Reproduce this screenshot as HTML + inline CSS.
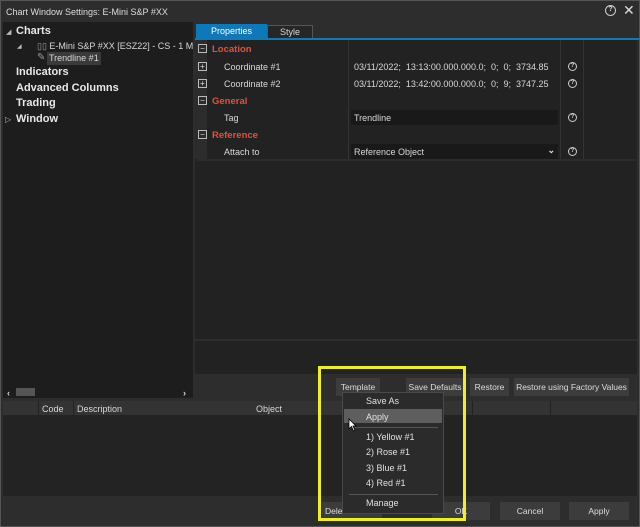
<!DOCTYPE html><html><head><style>
*{margin:0;padding:0;box-sizing:border-box}
body{width:640px;height:527px;background:#2d2d2d;font-family:"Liberation Sans",sans-serif;font-size:9px;color:#d8d8d8;position:relative;overflow:hidden}
div{position:absolute}
.b{font-weight:bold;font-size:11px;color:#e8e8e8}
.red{color:#e2513c;font-weight:bold;font-size:9.5px}
.pm{width:9px;height:9px;border:1px solid #bbb;left:198px;font-size:8px;line-height:7px;text-align:center;color:#ddd}
.btn{background:#3c3c3c;color:#ddd;height:18px;line-height:18px;text-align:center;font-size:8.5px}
.q{width:9px;height:9px;border:1.3px solid #ccc;border-radius:50%;left:568px;font-size:6px;line-height:7px;text-align:center;font-weight:bold}
.mi{left:366px;font-size:9px;color:#e0e0e0}
</style></head><body>
<div style="left:0;top:0;width:640px;height:527px;border:1px solid #555"></div>
<div style="left:6px;top:7px;font-size:9px;color:#ddd">Chart Window Settings: E-Mini S&amp;P #XX</div>
<div style="left:605px;top:5px;width:11px;height:11px;border:1.5px solid #ccc;border-radius:50%;font-size:7px;line-height:8px;text-align:center;font-weight:bold">?</div>
<div style="left:623px;top:2px;font-size:14px;color:#ddd">✕</div>
<!-- left tree -->
<div style="left:3px;top:22px;width:190px;height:376px;background:#1d1d1d"></div>
<div style="left:6px;top:28px;font-size:7px;color:#bbb">◢</div>
<div class="b" style="left:16px;top:25px">Charts</div>
<div style="left:17px;top:43px;font-size:6px;color:#bbb">◢</div>
<div style="left:37px;top:41px;font-size:9px;width:156px;overflow:hidden;white-space:nowrap"><span style="color:#999">▯▯ </span>E-Mini S&amp;P #XX [ESZ22] - CS - 1 Minute</div>
<div style="left:37px;top:52px;font-size:10px;color:#999">✎</div>
<div style="left:47px;top:52px;width:54px;height:13px;background:#3a3a3a;font-size:9px;padding:1px 2px">Trendline #1</div>
<div class="b" style="left:16px;top:66px">Indicators</div>
<div class="b" style="left:16px;top:82px">Advanced Columns</div>
<div class="b" style="left:16px;top:97px">Trading</div>
<div style="left:5px;top:115px;font-size:8px;color:#bbb">▷</div>
<div class="b" style="left:16px;top:113px">Window</div>
<div style="left:7px;top:388px;font-size:9px;font-weight:bold">‹</div>
<div style="left:16px;top:388px;width:19px;height:8px;background:#555"></div>
<div style="left:183px;top:388px;font-size:9px;font-weight:bold">›</div>
<!-- tabs -->
<div style="left:196px;top:24px;width:71px;height:15px;background:#0e78b8;color:#fff;text-align:center;line-height:14px">Properties</div>
<div style="left:267px;top:25px;width:46px;height:14px;border:1px solid #555;background:#262626;text-align:center;line-height:12px">Style</div>
<div style="left:195px;top:38px;width:445px;height:2px;background:#0e78b8"></div>
<!-- grid -->
<div style="left:195px;top:40px;width:442px;height:299px;background:#222"></div>
<div style="left:195px;top:40px;width:12px;height:119px;background:#2c2c2c"></div>
<div style="left:348px;top:40px;width:1px;height:119px;background:#333"></div>
<div style="left:560px;top:40px;width:1px;height:119px;background:#333"></div>
<div style="left:583px;top:40px;width:1px;height:119px;background:#333"></div>
<div style="left:197px;top:159px;width:440px;height:2px;background:#2c2c2c"></div>
<div class="pm" style="top:44px">−</div><div class="red" style="left:212px;top:44px">Location</div>
<div class="pm" style="top:62px">+</div><div style="left:224px;top:62px">Coordinate #1</div>
<div style="left:354px;top:62px;width:205px;overflow:hidden;white-space:nowrap">03/11/2022;&nbsp; 13:13:00.000.000.0;&nbsp; 0;&nbsp; 0;&nbsp; 3734.85</div><div class="q" style="top:62px">?</div>
<div class="pm" style="top:79px">+</div><div style="left:224px;top:79px">Coordinate #2</div>
<div style="left:354px;top:79px;width:205px;overflow:hidden;white-space:nowrap">03/11/2022;&nbsp; 13:42:00.000.000.0;&nbsp; 0;&nbsp; 9;&nbsp; 3747.25</div><div class="q" style="top:79px">?</div>
<div class="pm" style="top:96px">−</div><div class="red" style="left:212px;top:96px">General</div>
<div style="left:224px;top:113px">Tag</div>
<div style="left:351px;top:110px;width:207px;height:15px;background:#191919;padding:3px 3px">Trendline</div><div class="q" style="top:113px">?</div>
<div class="pm" style="top:130px">−</div><div class="red" style="left:212px;top:130px">Reference</div>
<div style="left:224px;top:147px">Attach to</div>
<div style="left:351px;top:144px;width:207px;height:15px;background:#191919;padding:3px 3px">Reference Object<span style="position:absolute;right:3px;top:1px;font-weight:bold">⌄</span></div><div class="q" style="top:147px">?</div>
<div style="left:195px;top:341px;width:442px;height:33px;background:#222"></div>
<!-- buttons -->
<div class="btn" style="left:336px;top:378px;width:44px">Template</div>
<div class="btn" style="left:406px;top:378px;width:58px">Save Defaults</div>
<div class="btn" style="left:470px;top:378px;width:39px">Restore</div>
<div class="btn" style="left:514px;top:378px;width:115px">Restore using Factory Values</div>
<!-- table -->
<div style="left:3px;top:401px;width:634px;height:14px;background:#333"></div>
<div style="left:38px;top:401px;width:1px;height:14px;background:#222"></div>
<div style="left:73px;top:401px;width:1px;height:14px;background:#222"></div>
<div style="left:42px;top:404px">Code</div><div style="left:77px;top:404px">Description</div><div style="left:256px;top:404px">Object</div>
<div style="left:472px;top:401px;width:1px;height:14px;background:#222"></div><div style="left:550px;top:401px;width:1px;height:14px;background:#222"></div>
<div style="left:3px;top:415px;width:634px;height:81px;background:#232323"></div>
<!-- bottom buttons -->
<div class="btn" style="left:322px;top:502px;width:60px;text-align:left;padding-left:3px">Delete</div>
<div class="btn" style="left:432px;top:502px;width:58px">OK</div>
<div class="btn" style="left:500px;top:502px;width:60px">Cancel</div>
<div class="btn" style="left:569px;top:502px;width:60px">Apply</div>
<!-- menu -->
<div style="left:342px;top:392px;width:102px;height:122px;background:#2b2b2b;border:1px solid #4a4a4a"></div>
<div style="left:344px;top:409px;width:98px;height:14px;background:#5e5e5e"></div>
<div class="mi" style="top:396px">Save As</div>
<div class="mi" style="top:412px">Apply</div>
<div style="left:349px;top:427px;width:89px;height:1px;background:#555"></div>
<div class="mi" style="top:432px">1) Yellow #1</div>
<div class="mi" style="top:447px">2) Rose #1</div>
<div class="mi" style="top:463px">3) Blue #1</div>
<div class="mi" style="top:478px">4) Red #1</div>
<div style="left:349px;top:494px;width:89px;height:1px;background:#555"></div>
<div class="mi" style="top:498px">Manage</div>
<svg style="position:absolute;left:348px;top:418px" width="9" height="14"><path d="M1 1 L1 11 L3.5 8.5 L5.5 13 L7 12.3 L5 8 L8 8 Z" fill="#fff" stroke="#000" stroke-width="0.8"/></svg>
<div style="left:318px;top:366px;width:148px;height:155px;border:3px solid #f0f020"></div>
</body></html>
